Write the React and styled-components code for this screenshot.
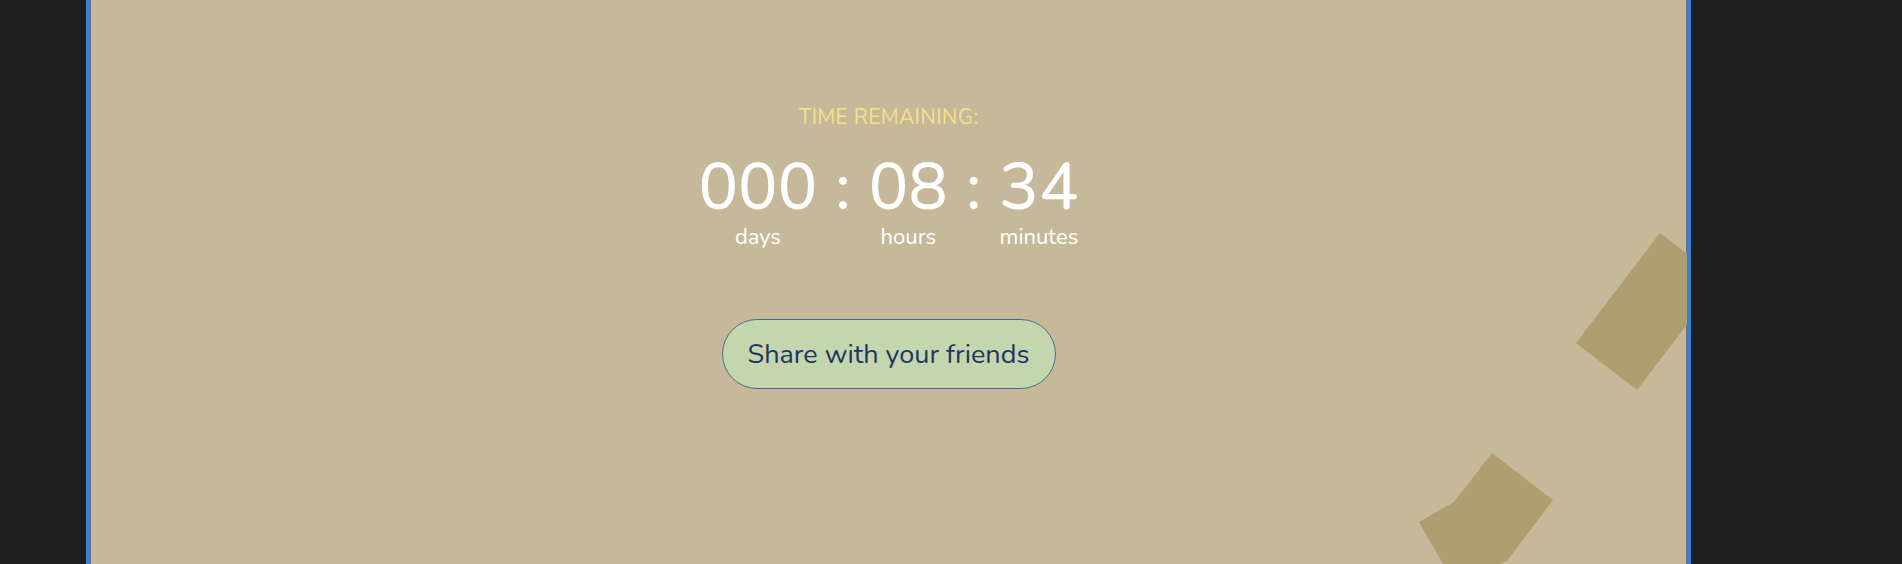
import React from 'react'
import styled, { createGlobalStyle } from 'styled-components'

const GlobalStyle = createGlobalStyle`
    html, body {
        margin: 0;
        padding: 0;
        height: 100%;
        background: #1e1e1e;
        overflow: hidden;
    }
    #root {
        height: 100%;
    }
`;

const units = [
    { value: '000', label: 'days' },
    { value: '08', label: 'hours' },
    { value: '34', label: 'minutes' },
]

const App = () => {
    return (
        <Page>
            <GlobalStyle />
            <Panel>
                <Confetti width="100%" height="100%">
                    <polygon points="1570,233 1631,280 1547,390 1486,343" />
                    <polygon points="1402,453 1463,500 1417,561 1395,571 1357,571 1329,522 1364,502" />
                </Confetti>
                <Content>
                    <Title>TIME REMAINING:</Title>
                    <Timer>
                        {units.map((u, i) => (
                            <React.Fragment key={u.label}>
                                {i > 0 && <Colon>:</Colon>}
                                <Unit>
                                    <Number>{u.value}</Number>
                                    <Label>{u.label}</Label>
                                </Unit>
                            </React.Fragment>
                        ))}
                    </Timer>
                    <ShareButton type="button">Share with your friends</ShareButton>
                </Content>
            </Panel>
        </Page>
    )
}

const Page = styled.div`
    height: 100%;
    padding-left: 86px;
    display: flex;
    font-family: Nunito, Lato, "Noto Sans", sans-serif;
`;

const Panel = styled.main`
    position: relative;
    width: 1605px;
    box-sizing: border-box;
    height: 100%;
    border-left: 4px solid #3a7fd6;
    border-right: 4px solid #3a7fd6;
    box-shadow: inset 1px 0 0 #6b6f7c, inset -1px 0 0 #6b6f7c;
    background: #c6b999;
    overflow: hidden;
`;

const Confetti = styled.svg`
    position: absolute;
    top: 0;
    left: 0;
    fill: #ae9e70;
    pointer-events: none;
`;

const Content = styled.div`
    position: relative;
    display: flex;
    flex-direction: column;
    align-items: center;
    padding-top: 105px;
`;

const Title = styled.h2`
    margin: 0;
    font-size: 21px;
    line-height: 24px;
    font-weight: 400;
    color: #f6e08c;
    letter-spacing: 0.3px;
`;

const Timer = styled.div`
    display: flex;
    align-items: flex-start;
    margin-top: 25px;
    color: #ffffff;
`;

const Unit = styled.div`
    display: flex;
    flex-direction: column;
    align-items: center;
`;

const Number = styled.span`
    font-size: 66px;
    line-height: 66px;
    font-weight: 500;
`;

const Colon = styled(Number)`
    padding: 0 18px;
`;

const Label = styled.span`
    font-size: 22px;
    line-height: 24px;
    margin-top: 5px;
`;

const ShareButton = styled.button`
    margin-top: 70px;
    width: 334px;
    height: 70px;
    border-radius: 35px;
    border: 1px solid #4d6a8e;
    background: #c3d6ae;
    color: #1f3560;
    font-family: inherit;
    font-size: 27px;
    cursor: pointer;
`;

export default App
